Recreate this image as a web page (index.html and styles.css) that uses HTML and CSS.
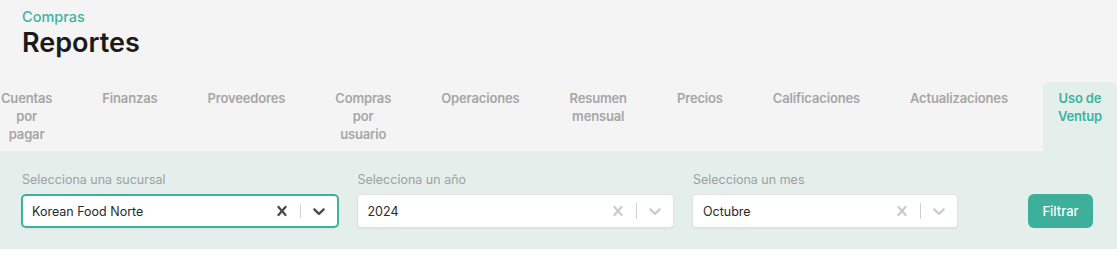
FILE: index.html
```html
<!DOCTYPE html>
<html lang="es">
<head>
    <meta charset="UTF-8">
    <meta name="viewport" content="width=device-width, initial-scale=1.0">
    <title>Reportes - Compras</title>
    <link rel="stylesheet" href="styles.css">
</head>
<body>
    <div class="top">
        <header class="page-header">
            <div class="breadcrumb">Compras</div>
            <h1>Reportes</h1>
        </header>

        <nav class="tabs">
            <a class="tab" href="#">Cuentas por pagar</a>
            <a class="tab" href="#">Finanzas</a>
            <a class="tab" href="#">Proveedores</a>
            <a class="tab" href="#">Compras por usuario</a>
            <a class="tab" href="#">Operaciones</a>
            <a class="tab" href="#">Resumen mensual</a>
            <a class="tab" href="#">Precios</a>
            <a class="tab" href="#">Calificaciones</a>
            <a class="tab" href="#">Actualizaciones</a>
            <a class="tab active" href="#">Uso de Ventup</a>
        </nav>
    </div>

    <section class="filters">
        <div class="field">
            <label>Selecciona una sucursal</label>
            <div class="select focused">
                <span class="select-value">Korean Food Norte</span>
                <span class="indicator">
                    <svg viewBox="0 0 20 20" width="20" height="20"><path d="M14.348 14.849c-0.469 0.469-1.229 0.469-1.697 0l-2.651-3.030-2.651 3.029c-0.469 0.469-1.229 0.469-1.697 0-0.469-0.469-0.469-1.229 0-1.697l2.758-3.15-2.759-3.152c-0.469-0.469-0.469-1.228 0-1.697s1.228-0.469 1.697 0l2.652 3.031 2.651-3.031c0.469-0.469 1.228-0.469 1.697 0s0.469 1.229 0 1.697l-2.758 3.152 2.758 3.15c0.469 0.469 0.469 1.229 0 1.698z"/></svg>
                </span>
                <span class="separator"></span>
                <span class="indicator">
                    <svg viewBox="0 0 20 20" width="20" height="20"><path d="M4.516 7.548c0.436-0.446 1.043-0.481 1.576 0l3.908 3.747 3.908-3.747c0.533-0.481 1.141-0.446 1.574 0 0.436 0.445 0.408 1.197 0 1.615-0.406 0.418-4.695 4.502-4.695 4.502-0.217 0.223-0.502 0.335-0.787 0.335s-0.57-0.112-0.789-0.335c0 0-4.287-4.084-4.695-4.502s-0.436-1.17 0-1.615z"/></svg>
                </span>
            </div>
        </div>

        <div class="field">
            <label>Selecciona un año</label>
            <div class="select">
                <span class="select-value">2024</span>
                <span class="indicator">
                    <svg viewBox="0 0 20 20" width="20" height="20"><path d="M14.348 14.849c-0.469 0.469-1.229 0.469-1.697 0l-2.651-3.030-2.651 3.029c-0.469 0.469-1.229 0.469-1.697 0-0.469-0.469-0.469-1.229 0-1.697l2.758-3.15-2.759-3.152c-0.469-0.469-0.469-1.228 0-1.697s1.228-0.469 1.697 0l2.652 3.031 2.651-3.031c0.469-0.469 1.228-0.469 1.697 0s0.469 1.229 0 1.697l-2.758 3.152 2.758 3.15c0.469 0.469 0.469 1.229 0 1.698z"/></svg>
                </span>
                <span class="separator"></span>
                <span class="indicator">
                    <svg viewBox="0 0 20 20" width="20" height="20"><path d="M4.516 7.548c0.436-0.446 1.043-0.481 1.576 0l3.908 3.747 3.908-3.747c0.533-0.481 1.141-0.446 1.574 0 0.436 0.445 0.408 1.197 0 1.615-0.406 0.418-4.695 4.502-4.695 4.502-0.217 0.223-0.502 0.335-0.787 0.335s-0.57-0.112-0.789-0.335c0 0-4.287-4.084-4.695-4.502s-0.436-1.17 0-1.615z"/></svg>
                </span>
            </div>
        </div>

        <div class="field field-month">
            <label>Selecciona un mes</label>
            <div class="select">
                <span class="select-value">Octubre</span>
                <span class="indicator">
                    <svg viewBox="0 0 20 20" width="20" height="20"><path d="M14.348 14.849c-0.469 0.469-1.229 0.469-1.697 0l-2.651-3.030-2.651 3.029c-0.469 0.469-1.229 0.469-1.697 0-0.469-0.469-0.469-1.229 0-1.697l2.758-3.15-2.759-3.152c-0.469-0.469-0.469-1.228 0-1.697s1.228-0.469 1.697 0l2.652 3.031 2.651-3.031c0.469-0.469 1.228-0.469 1.697 0s0.469 1.229 0 1.697l-2.758 3.152 2.758 3.15c0.469 0.469 0.469 1.229 0 1.698z"/></svg>
                </span>
                <span class="separator"></span>
                <span class="indicator">
                    <svg viewBox="0 0 20 20" width="20" height="20"><path d="M4.516 7.548c0.436-0.446 1.043-0.481 1.576 0l3.908 3.747 3.908-3.747c0.533-0.481 1.141-0.446 1.574 0 0.436 0.445 0.408 1.197 0 1.615-0.406 0.418-4.695 4.502-4.695 4.502-0.217 0.223-0.502 0.335-0.787 0.335s-0.57-0.112-0.789-0.335c0 0-4.287-4.084-4.695-4.502s-0.436-1.17 0-1.615z"/></svg>
                </span>
            </div>
        </div>

        <button class="btn-filter">Filtrar</button>
    </section>

    <main class="content"></main>
</body>
</html>
```

FILE: styles.css
```css
body {
    font-family: Inter, 'Noto Sans', sans-serif;
    margin: 0;
    background-color: #ffffff;
    color: #222;
}
.top {
    background-color: #f4f4f4;
}
.page-header {
    padding: 8px 22px 0;
    height: 74px;
    box-sizing: border-box;
}
.breadcrumb {
    color: #3db39e;
    font-size: 14.5px;
    font-weight: 500;
    line-height: 18px;
}
h1 {
    margin: 0;
    font-size: 27px;
    font-weight: 600;
    line-height: 34px;
    color: #1a1a1a;
}
.tabs {
    display: flex;
    justify-content: flex-end;
    gap: 20px;
    margin-top: 8px;
    overflow: hidden;
}
.tab {
    flex-shrink: 0;
    width: min-content;
    padding: 7px 15px 8px;
    font-size: 13px;
    font-weight: 600;
    line-height: 18px;
    letter-spacing: -0.15px;
    color: #a6a6a6;
    text-align: center;
    text-decoration: none;
}
.tab.active {
    background-color: #e4efec;
    color: #3db39e;
    border-radius: 7px 7px 0 0;
}
.filters {
    display: flex;
    align-items: flex-end;
    gap: 18px;
    padding: 20px 24px 21px 21px;
    background-color: #e4efec;
}
.field {
    flex: 1;
    min-width: 0;
}
.field-month {
    flex: 0 0 266px;
}
label {
    display: block;
    margin: 0 0 5px 1px;
    font-size: 12.5px;
    line-height: 18px;
    color: #a0a0a0;
}
.select {
    display: flex;
    align-items: center;
    height: 34px;
    box-sizing: border-box;
    background-color: #fff;
    border: 1px solid #e2e2e2;
    border-radius: 4px;
    box-shadow: 0 1px 2px rgba(0, 0, 0, 0.06);
}
.select.focused {
    border: 2px solid #3fb09c;
    border-radius: 5px;
}
.select-value {
    flex: 1;
    padding: 0 10px;
    font-size: 12.5px;
    color: #2a2a2a;
}
.select.focused .select-value {
    padding-left: 9px;
}
.indicator {
    display: flex;
    padding: 0 8px;
}
.indicator svg {
    fill: #cccccc;
}
.select.focused .indicator svg {
    fill: #4a4a4a;
}
.separator {
    align-self: stretch;
    width: 1px;
    margin: 8px 0;
    background-color: #d2d2d2;
}
.btn-filter {
    margin-left: 52px;
    width: 65px;
    height: 34px;
    border: none;
    border-radius: 6px;
    background-color: #3daf9b;
    color: #fff;
    font-family: inherit;
    font-size: 13px;
    font-weight: 500;
    cursor: pointer;
}
.btn-filter:hover {
    background-color: #349e8b;
}
.content {
    height: 13px;
}
```
